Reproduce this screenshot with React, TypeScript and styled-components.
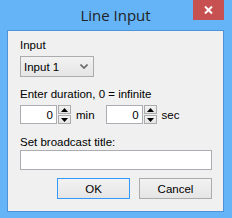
import React, { useState } from 'react';
import styled, { createGlobalStyle } from 'styled-components';

const GlobalStyle = createGlobalStyle`
  html, body {
    margin: 0;
    padding: 0;
  }
  body {
    width: 232px;
    height: 218px;
    overflow: hidden;
    font-family: "Liberation Sans", Arial, sans-serif;
    font-size: 11.5px;
    color: #000;
  }
`;

const SpinBox = ({ value }: { value: string }) => {
  return (
    <SpinWrap>
      <SpinInput value={value} readOnly />
      <SpinButtons>
        <SpinButton>
          <svg width="7" height="4" viewBox="0 0 7 4">
            <path d="M0 4 L3.5 0 L7 4 Z" fill="#000" />
          </svg>
        </SpinButton>
        <SpinButton>
          <svg width="7" height="4" viewBox="0 0 7 4">
            <path d="M0 0 L7 0 L3.5 4 Z" fill="#000" />
          </svg>
        </SpinButton>
      </SpinButtons>
    </SpinWrap>
  );
};

const App = () => {
  const [title, setTitle] = useState('');

  return (
    <>
      <GlobalStyle />
      <Window>
        <TitleBar>
          <Title>Line Input</Title>
          <CloseButton>
            <svg width="9" height="8" viewBox="0 0 9 8">
              <path d="M1 0.5 L8 7.5 M8 0.5 L1 7.5" stroke="#fff" strokeWidth="2" />
            </svg>
          </CloseButton>
        </TitleBar>
        <Client>
          <Label top={1}>Input</Label>
          <Select>
            <span>Input 1</span>
            <svg width="8" height="5" viewBox="0 0 8 5">
              <path d="M0.5 0.5 L4 4 L7.5 0.5" stroke="#666" strokeWidth="1.6" fill="none" />
            </svg>
          </Select>
          <Label top={10}>Enter duration, 0 = infinite</Label>
          <SpinRow>
            <SpinBox value="0" />
            <Unit>min</Unit>
            <SpinGap />
            <SpinBox value="0" />
            <Unit>sec</Unit>
          </SpinRow>
          <Label top={11}>Set broadcast title:</Label>
          <TextInput value={title} onChange={(e) => setTitle(e.target.value)} />
          <ButtonRow>
            <Button primary>OK</Button>
            <Button>Cancel</Button>
          </ButtonRow>
        </Client>
      </Window>
    </>
  );
};

export default App;

const Window = styled.div`
  width: 232px;
  height: 218px;
  box-sizing: border-box;
  background-color: #64b4f7;
  padding: 0 8px 6px 7px;
  display: flex;
  flex-direction: column;
`;

const TitleBar = styled.div`
  height: 30px;
  display: grid;
  grid-template-columns: 1fr auto 1fr;
  align-items: start;
`;

const Title = styled.div`
  grid-column: 2;
  font-family: "Open Sans", "Liberation Sans", sans-serif;
  font-size: 15px;
  line-height: 30px;
  color: #222;
`;

const CloseButton = styled.div`
  grid-column: 3;
  justify-self: end;
  width: 31px;
  height: 20px;
  background-color: #c75050;
  display: flex;
  align-items: center;
  justify-content: center;
`;

const Client = styled.div`
  flex: 1;
  border: 1px solid #4e93d9;
  background-color: #f0f0f0;
  padding: 6px 11px 0 12px;
  display: flex;
  flex-direction: column;
  align-items: flex-start;
`;

const Label = styled.div<{ top?: number }>`
  line-height: 15px;
  margin-top: ${({ top }) => top ?? 0}px;
`;

const Select = styled.div`
  margin-top: 3px;
  width: 74px;
  height: 21px;
  box-sizing: border-box;
  border: 1px solid #acacac;
  background: linear-gradient(#f2f2f2, #e5e5e5);
  display: flex;
  align-items: center;
  justify-content: space-between;
  padding: 0 5px 0 3px;
`;

const SpinRow = styled.div`
  margin-top: 3px;
  display: flex;
  align-items: center;
`;

const SpinWrap = styled.div`
  display: flex;
  align-items: stretch;
`;

const SpinInput = styled.input`
  width: 37px;
  height: 19px;
  box-sizing: border-box;
  border: 1px solid #abadb3;
  background: #fff;
  text-align: right;
  padding: 0 3px 0 0;
  font: inherit;
  outline: none;
`;

const SpinButtons = styled.div`
  margin-left: 1px;
  display: flex;
  flex-direction: column;
`;

const SpinButton = styled.div`
  width: 13px;
  height: 9px;
  box-sizing: border-box;
  border: 1px solid #acacac;
  background: linear-gradient(#f2f2f2, #e5e5e5);
  display: flex;
  align-items: center;
  justify-content: center;

  & + & {
    margin-top: 1px;
  }
`;

const Unit = styled.span`
  margin-left: 5px;
`;

const SpinGap = styled.div`
  width: 11px;
`;

const TextInput = styled.input`
  width: 192px;
  height: 20px;
  box-sizing: border-box;
  border: 1px solid #abadb3;
  background: #fff;
  font: inherit;
  outline: none;
`;

const ButtonRow = styled.div`
  align-self: stretch;
  margin-top: 8px;
  display: flex;
  justify-content: flex-end;
  gap: 9px;
`;

const Button = styled.button<{ primary?: boolean }>`
  width: 73px;
  height: 21px;
  box-sizing: border-box;
  border: 1px solid ${({ primary }) => (primary ? '#3399ff' : '#acacac')};
  background: linear-gradient(#f2f2f2, #e5e5e5);
  font: inherit;
  color: #000;
  padding: 0;
`;
